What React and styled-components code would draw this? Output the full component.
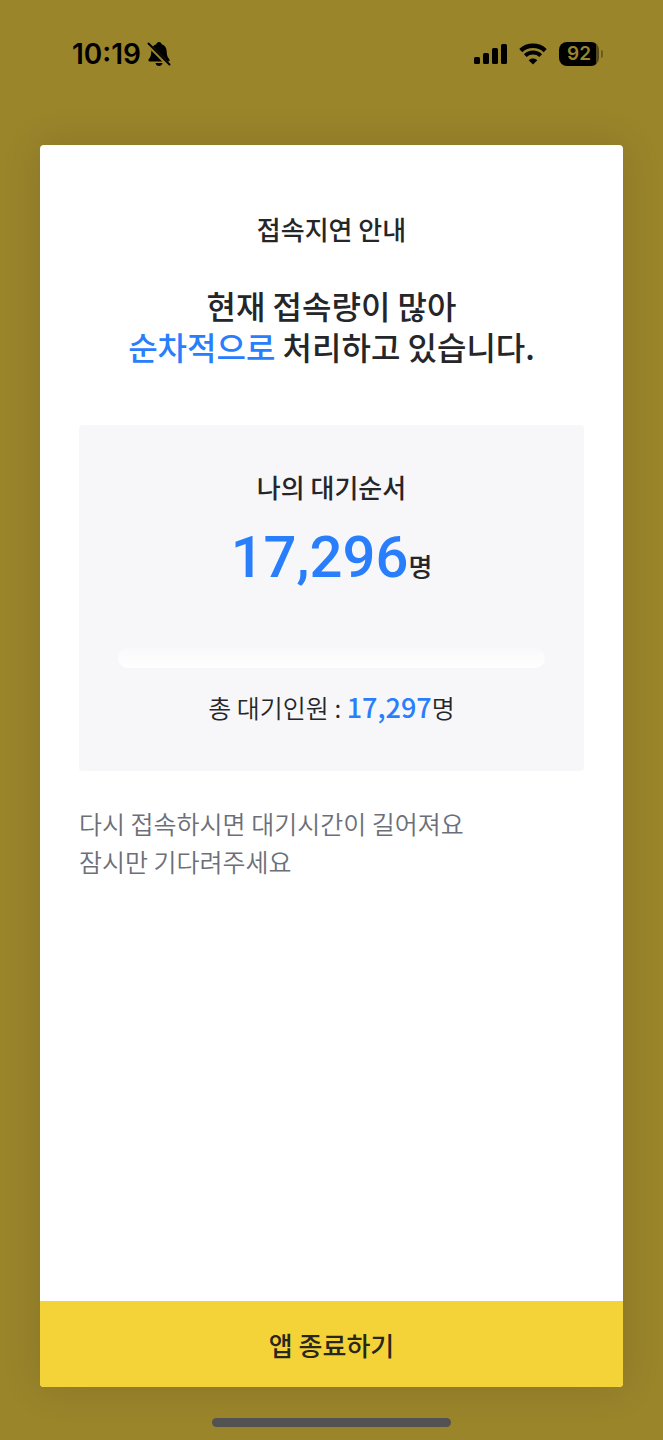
import React from 'react';
import styled, { createGlobalStyle } from 'styled-components';

const GlobalStyle = createGlobalStyle`
  * {
    box-sizing: border-box;
  }

  body {
    margin: 0;
    background: #9a852b;
    color: #252629;
    font-family: 'Noto Sans CJK KR', sans-serif;
  }
`;

const Screen = styled.div`
  display: flex;
  flex-direction: column;
  min-height: 100vh;
`;

const StatusBar = styled.header`
  display: flex;
  justify-content: space-between;
  align-items: center;
  padding: 36px 60px 73px 72px;
  color: #000;
  font-family: Inter, sans-serif;
`;

const StatusGroup = styled.div`
  display: flex;
  align-items: center;
  gap: ${props => props.gap};
`;

const Time = styled.time`
  font-size: 28px;
  font-weight: 600;
  line-height: 36px;
`;

const Battery = styled.div`
  display: flex;
  align-items: center;
  gap: 2px;
`;

const BatteryLevel = styled.span`
  width: 40px;
  height: 24px;
  border-radius: 8px;
  background: linear-gradient(to right, #000 92%, #54491a 92%);
  color: #9a852b;
  font-size: 19px;
  font-weight: 600;
  line-height: 24px;
  text-align: center;
`;

const BatteryTip = styled.span`
  width: 2px;
  height: 8px;
  border-radius: 0 2px 2px 0;
  background: #6c5d1f;
`;

const Card = styled.main`
  flex: 1;
  display: flex;
  flex-direction: column;
  margin: 0 40px;
  border-radius: 4px;
  background: #fff;
  overflow: hidden;
  box-shadow: 0 0 40px rgba(0, 0, 0, 0.12);
`;

const CardContent = styled.div`
  flex: 1;
  padding: 66px 39px 40px;
`;

const Subject = styled.p`
  margin: 0;
  font-size: 26px;
  font-weight: 500;
  line-height: 36px;
  text-align: center;
`;

const Title = styled.h1`
  margin: 38px 0 58px;
  font-size: 32px;
  font-weight: 500;
  line-height: 41px;
  text-align: center;
`;

const Blue = styled.span`
  color: #297efc;
`;

const QueueBox = styled.section`
  padding: 44px 39px 46px;
  border-radius: 4px;
  background: #f7f7f9;
  text-align: center;
`;

const QueueLabel = styled.h2`
  margin: 0;
  font-size: 26px;
  font-weight: 500;
  line-height: 36px;
`;

const QueueNumber = styled.p`
  margin: 12px 0 42px;
  font-size: 26px;
  font-weight: 500;
  line-height: 80px;
`;

const BigNumber = styled.strong`
  color: #297efc;
  font-family: Roboto, sans-serif;
  font-size: 58px;
  font-weight: 500;
`;

const Progress = styled.div`
  height: 20px;
  border-radius: 10px;
  background: linear-gradient(#f9f9fb, #fff);
`;

const QueueTotal = styled.p`
  margin: 21px 0 0;
  font-size: 25px;
  font-weight: 350;
  line-height: 36px;
`;

const TotalNumber = styled.strong`
  color: #297efc;
  font-size: 27px;
  font-weight: 500;
`;

const Notice = styled.p`
  margin: 33px 0 0;
  color: #6c6f78;
  font-size: 25px;
  font-weight: 350;
  line-height: 38px;
`;

const ExitButton = styled.button`
  height: 86px;
  border: 0;
  padding: 0;
  background: #f4d338;
  color: #29271c;
  font-family: inherit;
  font-size: 26px;
  font-weight: 500;
  cursor: pointer;
`;

const HomeArea = styled.footer`
  display: flex;
  justify-content: center;
  padding: 31px 0 13px;
`;

const HomeIndicator = styled.div`
  width: 36%;
  height: 9px;
  border-radius: 5px;
  background: #525252;
`;

const BellOff = () => (
  <svg width="24" height="26" viewBox="0 0 24 26" aria-hidden="true">
    <path
      d="M12 1C10.400 1 9.600 2 9.400 3.200C5.900 4.200 4.400 7 4.300 10.500C4.200 14.500 3.500 16 2 17.800C1 19 1.200 20.500 2.800 20.500H21.200C22.800 20.500 23 19 22 17.800C20.500 16 19.800 14.500 19.700 10.500C19.600 7 18.100 4.200 14.600 3.200C14.400 2 13.600 1 12 1ZM8.500 22H15.500C15.200 24 13.800 25 12 25S8.800 24 8.500 22Z"
      fill="#000"
    />
    <path d="M0 2.500L22 24.500" stroke="#9a852b" strokeWidth="4" />
    <path d="M1.500 2.500L22.500 23.500" stroke="#000" strokeWidth="2" strokeLinecap="round" />
  </svg>
);

const Signal = () => (
  <svg width="33" height="22" viewBox="0 0 33 22" aria-hidden="true">
    <rect x="0" y="14" width="6" height="7" rx="1.500" />
    <rect x="9" y="10" width="6" height="11" rx="1.500" />
    <rect x="18" y="5" width="6" height="16" rx="1.500" />
    <rect x="27" y="1" width="6" height="20" rx="1.500" />
  </svg>
);

const Wifi = () => (
  <svg width="28" height="22" viewBox="0 0 28 22" fill="none" stroke="#000" aria-hidden="true">
    <path d="M1.800 7.600C8.500 1.200 19.500 1.200 26.200 7.600" strokeWidth="4.400" />
    <path d="M6.300 12.600C10.600 8.600 17.400 8.600 21.700 12.600" strokeWidth="4" />
    <path d="M14 21.500L9.700 17.200C12.100 14.800 15.900 14.800 18.300 17.200Z" fill="#000" stroke="none" />
  </svg>
);

const App = () => (
  <>
    <GlobalStyle />
    <Screen>
      <StatusBar>
        <StatusGroup gap="6px">
          <Time>10:19</Time>
          <BellOff />
        </StatusGroup>
        <StatusGroup gap="12px">
          <Signal />
          <Wifi />
          <Battery>
            <BatteryLevel>92</BatteryLevel>
            <BatteryTip />
          </Battery>
        </StatusGroup>
      </StatusBar>
      <Card>
        <CardContent>
          <Subject>접속지연 안내</Subject>
          <Title>
            현재 접속량이 많아
            <br />
            <Blue>순차적으로</Blue> 처리하고 있습니다.
          </Title>
          <QueueBox>
            <QueueLabel>나의 대기순서</QueueLabel>
            <QueueNumber>
              <BigNumber>17,296</BigNumber>명
            </QueueNumber>
            <Progress />
            <QueueTotal>
              총 대기인원 : <TotalNumber>17,297</TotalNumber>명
            </QueueTotal>
          </QueueBox>
          <Notice>
            다시 접속하시면 대기시간이 길어져요
            <br />
            잠시만 기다려주세요
          </Notice>
        </CardContent>
        <ExitButton type="button">앱 종료하기</ExitButton>
      </Card>
      <HomeArea>
        <HomeIndicator />
      </HomeArea>
    </Screen>
  </>
);

export default App;
